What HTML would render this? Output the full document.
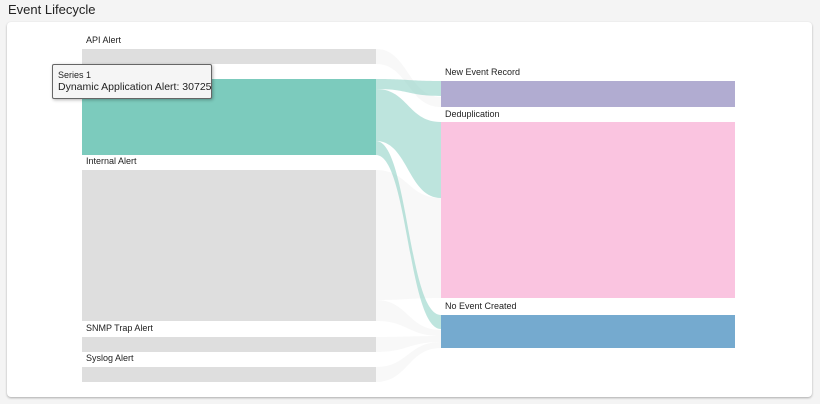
<!DOCTYPE html>
<html><head><style>
body{margin:0;width:820px;height:404px;background:#f4f4f4;font-family:"Liberation Sans",sans-serif;position:relative;overflow:hidden}
.t{position:absolute;left:8px;top:2px;font-size:13px;color:#222}
.card{position:absolute;left:7px;top:22px;width:805px;height:375px;background:#fff;border-radius:4px;box-shadow:0 1px 2px rgba(0,0,0,.3)}
svg{position:absolute;left:0;top:0}
.tip{position:absolute;left:52px;top:64px;width:160px;height:35px;background:#f5f5f5;border:1px solid #666;border-radius:2px;box-shadow:1px 1px 3px rgba(0,0,0,.3);font-size:10.5px;color:#222;box-sizing:border-box;padding:4px 0 0 5px;line-height:12px;white-space:nowrap;overflow:hidden}
</style></head><body>
<div class="t">Event Lifecycle</div>
<div class="card"></div>
<svg width="820" height="404" font-family="Liberation Sans, sans-serif" font-size="9" fill="#222">
<g fill="#ececec" opacity="0.35">
<path d="M376 49 C408 49 408 97 441 97 L441 107 C408 107 408 64 376 64Z"/>
<path d="M376 170 C408 170 408 198 441 198 L441 298 C408 298 408 300 376 300Z"/>
<path d="M376 300 C408 300 408 330 441 330 L441 336 C408 336 408 321 376 321Z"/>
<path d="M376 337 C408 337 408 336 441 336 L441 342 C408 342 408 352 376 352Z"/>
<path d="M376 367 C408 367 408 342 441 342 L441 348 C408 348 408 382 376 382Z"/>
</g>
<g fill="#7ecbbd" opacity="0.5">
<path d="M376 79 C408 79 408 81 441 81 L441 96 C408 96 408 89 376 89Z"/>
<path d="M376 89 C408 89 408 122 441 122 L441 198 C408 198 408 141 376 141Z"/>
<path d="M376 141 C408 141 408 315 441 315 L441 329 C408 329 408 155 376 155Z"/>
</g>
<rect x="82" y="49" width="294" height="15" fill="#dedede"/>
<rect x="82" y="79" width="294" height="76" fill="#7ccbbd"/>
<rect x="82" y="170" width="294" height="151" fill="#dedede"/>
<rect x="82" y="337" width="294" height="15" fill="#dedede"/>
<rect x="82" y="367" width="294" height="15" fill="#dedede"/>
<rect x="441" y="81" width="294" height="26" fill="#b1acd1"/>
<rect x="441" y="122" width="294" height="176" fill="#fac4e0"/>
<rect x="441" y="315" width="294" height="33" fill="#75aacf"/>
<text x="86" y="43">API Alert</text>
<text x="86" y="164">Internal Alert</text>
<text x="86" y="331">SNMP Trap Alert</text>
<text x="86" y="361">Syslog Alert</text>
<text x="445" y="75">New Event Record</text>
<text x="445" y="117">Deduplication</text>
<text x="445" y="309">No Event Created</text>
</svg>
<div class="tip"><span style="font-size:9px">Series 1</span><br>Dynamic Application Alert: 30725</div>
</body></html>
